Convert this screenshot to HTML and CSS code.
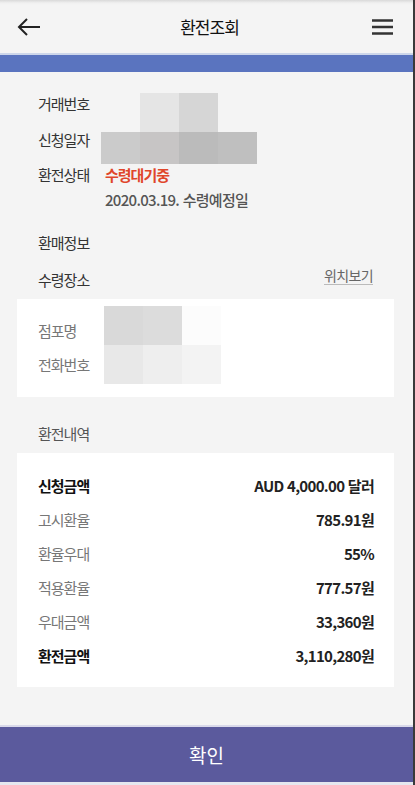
FILE: index.html
```html
<!DOCTYPE html>
<html lang="ko">
<head>
<meta charset="utf-8">
<title>환전조회</title>
<link rel="stylesheet" href="styles.css">
</head>
<body>
<div class="page">
  <header class="topbar">
    <button class="icon-btn back" aria-label="뒤로">
      <svg width="24" height="18" viewBox="0 0 24 18"><path d="M10 1 L2 9 L10 17 M2 9 H23" fill="none" stroke="#222" stroke-width="2"/></svg>
    </button>
    <h1 class="title">환전조회</h1>
    <button class="icon-btn menu" aria-label="메뉴">
      <svg width="21" height="16" viewBox="0 0 21 16"><path d="M0 1.5 H21 M0 8 H21 M0 14.5 H21" fill="none" stroke="#333" stroke-width="2.4"/></svg>
    </button>
  </header>
  <div class="accent"></div>

  <main class="content">
    <section class="info">
      <div class="mosaic mosaic-a">
        <span></span><span class="c1"></span><span class="c2"></span><span></span>
        <span class="c3"></span><span class="c4"></span><span class="c5"></span><span class="c6"></span>
      </div>
      <div class="row"><span class="label">거래번호</span><span class="value"></span></div>
      <div class="row"><span class="label">신청일자</span><span class="value"></span></div>
      <div class="row status">
        <span class="label">환전상태</span>
        <div class="value">
          <div class="status-text">수령대기중</div>
          <div class="status-date">2020.03.19. 수령예정일</div>
        </div>
      </div>
    </section>

    <div class="section-title">환매정보</div>
    <div class="place-row">
      <span class="section-label">수령장소</span>
      <a class="link" href="#">위치보기</a>
    </div>
    <section class="card branch">
      <div class="mosaic mosaic-b">
        <span class="d1"></span><span class="d2"></span><span class="d3"></span>
        <span class="d4"></span><span class="d5"></span><span class="d6"></span>
      </div>
      <div class="crow"><span class="clabel">점포명</span></div>
      <div class="crow"><span class="clabel">전화번호</span></div>
    </section>

    <div class="section-title history">환전내역</div>
    <section class="card details">
      <div class="drow strong"><span>신청금액</span><span class="amt">AUD 4,000.00 달러</span></div>
      <div class="drow"><span>고시환율</span><span class="amt">785.91원</span></div>
      <div class="drow"><span>환율우대</span><span class="amt">55%</span></div>
      <div class="drow"><span>적용환율</span><span class="amt">777.57원</span></div>
      <div class="drow"><span>우대금액</span><span class="amt">33,360원</span></div>
      <div class="drow strong"><span>환전금액</span><span class="amt">3,110,280원</span></div>
    </section>
  </main>

  <footer class="footer">
    <button class="confirm">확인</button>
  </footer>
</div>
</body>
</html>
```

FILE: styles.css
```css
* { box-sizing: border-box; }
html, body { margin: 0; padding: 0; }
body {
  background: #f4f4f4;
  font-family: "Noto Sans CJK KR", "Noto Sans", sans-serif;
  color: #222;
}
.page {
  width: 415px;
  height: 785px;
  display: flex;
  flex-direction: column;
  border-right: 2px solid #3a3a3a;
  background: #f4f4f4;
  overflow: hidden;
}
.topbar {
  height: 53px;
  display: flex;
  align-items: center;
  justify-content: space-between;
  padding: 0 20px 0 17px;
  background: linear-gradient(#d9d9d9 0, #f0f0f0 3px, #f4f4f4 5px);
  flex: none;
}
.icon-btn {
  border: 0;
  background: none;
  padding: 0;
  display: flex;
  align-items: center;
  justify-content: center;
}
.back { width: 24px; height: 18px; margin-top: 1px; }
.menu { width: 21px; height: 16px; }
.title {
  margin: 0;
  font-size: 17px;
  font-weight: 400;
  color: #111;
  letter-spacing: -1px;
  padding-left: 6px;
}
.accent {
  flex: none;
  height: 19px;
  border-top: 2px solid #cdd6ea;
  background: #5a74bf;
}
.content {
  flex: 1;
  display: flex;
  flex-direction: column;
  letter-spacing: -1px;
}
.info {
  position: relative;
  padding: 13px 0 0 38px;
}
.row {
  display: flex;
  height: 36px;
  align-items: center;
  font-size: 15px;
}
.label { width: 67px; color: #333; flex: none; }
.row.status { height: auto; align-items: flex-start; padding-top: 5px; }
.row.status .label { line-height: 25px; }
.status-text {
  line-height: 25px;
  color: #e0462b;
  font-weight: 700;
}
.status-date {
  line-height: 25px;
  color: #555;
  font-weight: 500;
  letter-spacing: -0.7px;
}
.mosaic {
  position: absolute;
  display: grid;
}
.mosaic span { display: block; }
.mosaic-a {
  left: 101px;
  top: 21px;
  grid-template-columns: repeat(4, 39px);
  grid-template-rows: 39px 32px;
}
.mosaic-a .c1 { background: #e5e5e5; }
.mosaic-a .c2 { background: #d6d6d6; }
.mosaic-a .c3 { background: #cbcbcb; }
.mosaic-a .c4 { background: #c7c5c5; }
.mosaic-a .c5 { background: #bbbbbb; }
.mosaic-a .c6 { background: #bfbfbf; }

.section-title {
  padding-left: 38px;
  line-height: 36px;
  font-size: 15px;
  color: #333;
  margin-top: 13px;
}
.place-row {
  display: flex;
  justify-content: space-between;
  align-items: center;
  height: 36px;
  padding: 0 40px 0 38px;
  font-size: 15px;
}
.section-label { color: #333; }
.link {
  color: #666;
  font-size: 14px;
  letter-spacing: -0.6px;
  text-decoration: none;
  border-bottom: 1px solid #bbb;
  line-height: 17px;
  margin-top: -6px;
}
.card {
  background: #fff;
  margin: 0 19px 0 17px;
  position: relative;
}
.branch {
  margin-top: 2px;
  padding: 14px 21px 16px;
}
.crow {
  height: 34px;
  display: flex;
  align-items: center;
  font-size: 15px;
  color: #777;
}
.mosaic-b {
  left: 87px;
  top: 7px;
  grid-template-columns: repeat(3, 39px);
  grid-template-rows: 39px 39px;
}
.mosaic-b .d1 { background: #d9d9d9; }
.mosaic-b .d2 { background: #dcdcdc; }
.mosaic-b .d3 { background: #fcfcfc; }
.mosaic-b .d4 { background: #e8e8e8; }
.mosaic-b .d5 { background: #eeeeee; }
.mosaic-b .d6 { background: #f3f3f3; }

.section-title.history {
  margin-top: 19px;
  margin-bottom: 1px;
  color: #555;
}
.details {
  padding: 15px 20px 15px 21px;
}
.drow {
  height: 34px;
  display: flex;
  justify-content: space-between;
  align-items: center;
  font-size: 15px;
  color: #777;
}
.drow .amt {
  color: #222;
  font-weight: 700;
  letter-spacing: -0.7px;
}
.drow.strong > span:first-child {
  color: #111;
  font-weight: 700;
}
.footer {
  flex: none;
  border-top: 2px solid #d9d9ea;
  border-bottom: 3px solid #e5e7ef;
}
.confirm {
  display: block;
  width: 100%;
  height: 55px;
  border: 0;
  background: #5b5a9d;
  color: #fff;
  font-family: "Noto Sans CJK KR", sans-serif;
  font-size: 19px;
  font-weight: 400;
}
```
